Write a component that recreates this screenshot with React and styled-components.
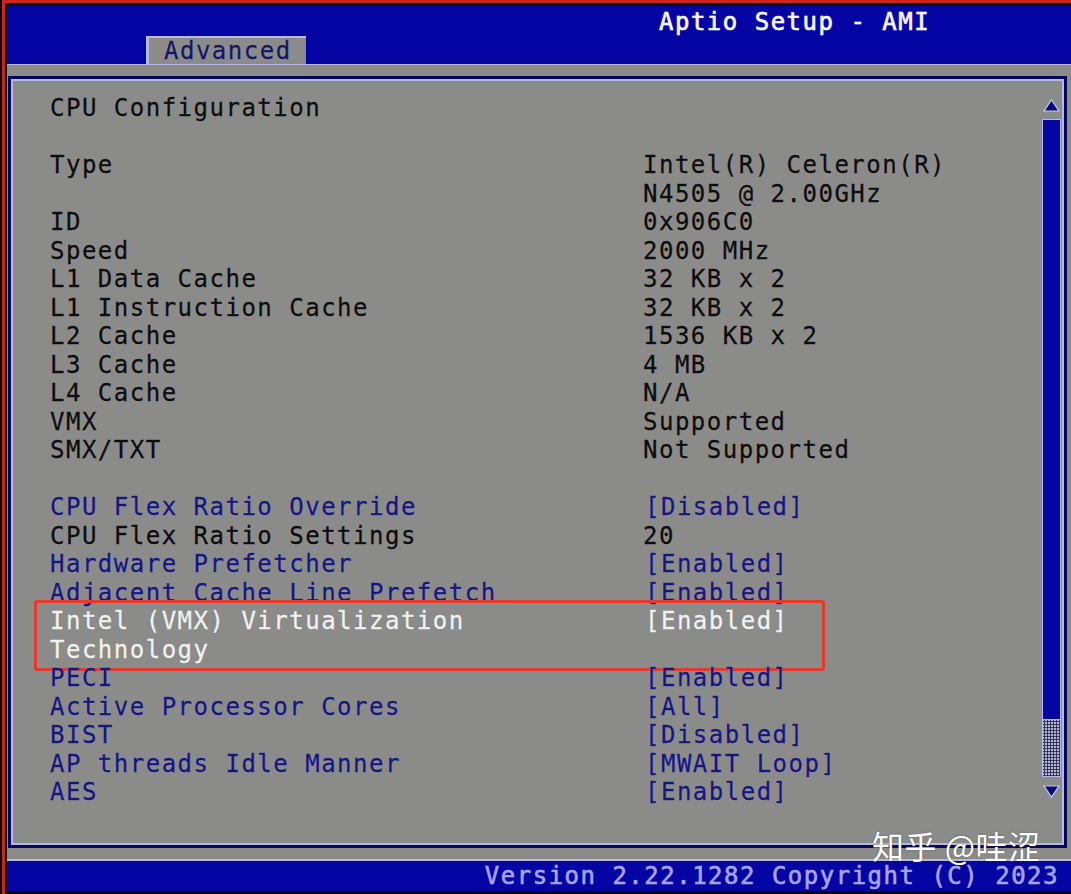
import React from "react";
import styled, { createGlobalStyle } from "styled-components";

const GlobalStyle = createGlobalStyle`
  html, body {
    margin: 0;
    padding: 0;
    background: #0a0a0a;
  }
  #root {
    width: 1071px;
    height: 894px;
    overflow: hidden;
  }
`;

const BLUE = "#0505a4";
const GRAY = "#8b8c8a";
const DARK = "#07075c";
const LIGHT = "#b8b8e4";
const MONO = `"DejaVu Sans Mono", "Liberation Mono", monospace`;

const Frame = styled.div`
  width: 1071px;
  height: 894px;
  box-sizing: border-box;
  padding-left: 2px;
  background: #0d0808;
  position: relative;
`;

const Screen = styled.div`
  height: 100%;
  box-sizing: border-box;
  border-top: 3px solid #d0231c;
  border-left: 3px solid #d0231c;
  padding: 3px 0 3px 2px;
  background: #050505;
  display: flex;
  flex-direction: column;
  font-family: ${MONO};
  font-size: 24px;
  letter-spacing: 1.5px;
  -webkit-text-stroke: 0.45px currentColor;
`;

const Header = styled.div`
  height: 58px;
  background: ${BLUE};
  display: flex;
  flex-direction: column;
  border-bottom: 1px solid ${LIGHT};
`;

const Title = styled.div`
  padding: 2px 0 0 652px;
  height: 28px;
  line-height: 28px;
  color: #f4f4f8;
  text-shadow: 0 0 1px #c0c0ff;
`;

const Tab = styled.div`
  margin-left: 139px;
  width: 160px;
  height: 28px;
  box-sizing: border-box;
  border-top: 2px solid ${LIGHT};
  border-left: 3px solid ${LIGHT};
  background: ${GRAY};
  color: #15155e;
  line-height: 26px;
  padding-left: 15px;
  text-shadow: 0 0 1px #d8d8f0;
`;

const Body = styled.div`
  flex: 1;
  background: ${GRAY};
  padding: 11px 4px 11px 1px;
  display: flex;
  flex-direction: column;
  border-bottom: 2px solid ${LIGHT};
`;

const Panel = styled.div`
  height: 772px;
  box-sizing: border-box;
  border: 3px solid ${DARK};
  box-shadow: inset 2px 2px 0 ${LIGHT}, inset -2px -2px 0 ${LIGHT};
  display: flex;
`;

const Content = styled.div`
  flex: 1;
  padding: 15px 0 0 39px;
`;

const Row = styled.div`
  position: relative;
  display: grid;
  grid-template-columns: 593px 1fr;
  line-height: 28.5px;
  min-height: 28.5px;
  white-space: pre-line;
  color: ${(p) =>
    p.$kind === "item" ? "#15157a" : p.$kind === "selected" ? "#f2f2f2" : "#0c0c0c"};
  text-shadow: ${(p) =>
    p.$kind === "selected"
      ? "0 0 1px #404040"
      : p.$kind === "item"
      ? "0 0 1px #d8d8f4"
      : "0 0 1px #d4d4d4"};
`;

const Value = styled.span`
  margin-left: ${(p) => (p.$bracket ? "2px" : "0")};
`;

const Annotation = styled.div`
  position: absolute;
  left: -16px;
  top: -7px;
  width: 785px;
  bottom: -7px;
  border: 3px solid #e5392c;
  border-radius: 3px;
  pointer-events: none;
`;

const Scroll = styled.div`
  width: 19px;
  margin-right: 3px;
  padding-top: 20px;
  display: flex;
  flex-direction: column;
  align-items: center;
`;

const Arrow = styled.svg`
  width: 19px;
  height: 13px;
  display: block;
`;

const Thumb = styled.div`
  margin-top: 7px;
  width: 19px;
  height: 600px;
  box-sizing: border-box;
  background: ${BLUE};
  border: 1px solid ${LIGHT};
  border-bottom: none;
`;

const Track = styled.div`
  width: 19px;
  height: 58px;
  box-sizing: border-box;
  border: 1px solid ${LIGHT};
  background-color: #b4b4cc;
  background-image: radial-gradient(circle, #20204a 45%, transparent 55%);
  background-size: 3px 3px;
  margin-bottom: 8px;
`;

const Footer = styled.div`
  height: 30px;
  background: ${BLUE};
  color: #a4a4ee;
  line-height: 30px;
  text-align: right;
  padding-right: 12px;
  text-shadow: 0 0 1px #6060d0;
`;

const Watermark = styled.div`
  position: absolute;
  left: 872px;
  top: 831px;
  font-family: "Noto Sans CJK SC", "Noto Sans", sans-serif;
  font-size: 32px;
  line-height: 29px;
  color: #ffffff;
  letter-spacing: 0.5px;
  text-shadow: 0 0 2px rgba(60, 60, 60, 0.6);
`;

const rows = [
  { label: "CPU Configuration" },
  { label: "" },
  { label: "Type", value: "Intel(R) Celeron(R)\nN4505 @ 2.00GHz" },
  { label: "ID", value: "0x906C0" },
  { label: "Speed", value: "2000 MHz" },
  { label: "L1 Data Cache", value: "32 KB x 2" },
  { label: "L1 Instruction Cache", value: "32 KB x 2" },
  { label: "L2 Cache", value: "1536 KB x 2" },
  { label: "L3 Cache", value: "4 MB" },
  { label: "L4 Cache", value: "N/A" },
  { label: "VMX", value: "Supported" },
  { label: "SMX/TXT", value: "Not Supported" },
  { label: "" },
  { label: "CPU Flex Ratio Override", value: "[Disabled]", kind: "item" },
  { label: "CPU Flex Ratio Settings", value: "20" },
  { label: "Hardware Prefetcher", value: "[Enabled]", kind: "item" },
  { label: "Adjacent Cache Line Prefetch", value: "[Enabled]", kind: "item" },
  {
    label: "Intel (VMX) Virtualization\nTechnology",
    value: "[Enabled]",
    kind: "selected",
    marked: true,
  },
  { label: "PECI", value: "[Enabled]", kind: "item" },
  { label: "Active Processor Cores", value: "[All]", kind: "item" },
  { label: "BIST", value: "[Disabled]", kind: "item" },
  { label: "AP threads Idle Manner", value: "[MWAIT Loop]", kind: "item" },
  { label: "AES", value: "[Enabled]", kind: "item" },
];

function UpArrow() {
  return (
    <Arrow viewBox="0 0 19 13">
      <polygon points="9.5,1 17,12 2,12" fill="#0a0a80" stroke="#c8c8ee" strokeWidth="1.2" />
    </Arrow>
  );
}

function DownArrow() {
  return (
    <Arrow viewBox="0 0 19 13">
      <polygon points="2,1 17,1 9.5,12" fill="#0a0a80" stroke="#c8c8ee" strokeWidth="1.2" />
    </Arrow>
  );
}

export default function App() {
  return (
    <>
      <GlobalStyle />
      <Frame>
        <Screen>
          <Header>
            <Title>Aptio Setup - AMI</Title>
            <Tab>Advanced</Tab>
          </Header>
          <Body>
            <Panel>
              <Content>
                {rows.map((r, i) => (
                  <Row key={i} $kind={r.kind}>
                    <span>{r.label}</span>
                    {r.value && (
                      <Value $bracket={r.value.startsWith("[")}>{r.value}</Value>
                    )}
                    {r.marked && <Annotation />}
                  </Row>
                ))}
              </Content>
              <Scroll>
                <UpArrow />
                <Thumb />
                <Track />
                <DownArrow />
              </Scroll>
            </Panel>
          </Body>
          <Footer>Version 2.22.1282 Copyright (C) 2023</Footer>
        </Screen>
        <Watermark>知乎 @哇涩</Watermark>
      </Frame>
    </>
  );
}
